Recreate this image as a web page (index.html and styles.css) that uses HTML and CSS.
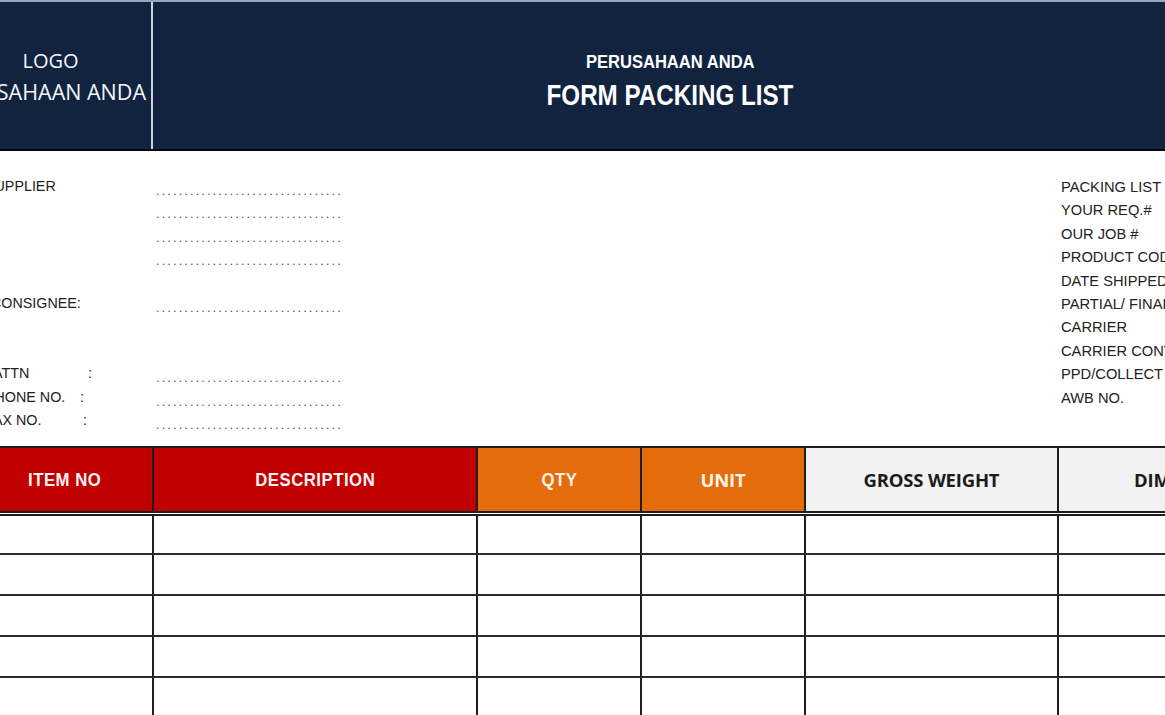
FILE: index.html
```html
<!DOCTYPE html>
<html lang="id">
<head>
<meta charset="utf-8">
<title>Form Packing List</title>
<link rel="stylesheet" href="styles.css">
</head>
<body>
<div class="sheet">
  <header class="banner">
    <div class="logo">
      <span>LOGO</span>
      <span class="logo-name">PERUSAHAAN ANDA</span>
    </div>
    <div class="title">
      <div class="company"><span class="sx">PERUSAHAAN ANDA</span></div>
      <div class="form-name"><span class="sx">FORM PACKING LIST</span></div>
    </div>
  </header>

  <section class="info">
    <div class="party">
      <div class="irow"><span class="lbl">SUPPLIER</span><span class="col"></span><span class="dots">.................................</span></div>
      <div class="irow"><span class="lbl"></span><span class="col"></span><span class="dots">.................................</span></div>
      <div class="irow"><span class="lbl"></span><span class="col"></span><span class="dots">.................................</span></div>
      <div class="irow"><span class="lbl"></span><span class="col"></span><span class="dots">.................................</span></div>
      <div class="irow"></div>
      <div class="irow"><span class="lbl lbl-cons">CONSIGNEE:</span><span class="col"></span><span class="dots">.................................</span></div>
      <div class="irow"></div>
      <div class="irow"></div>
      <div class="irow"><span class="lbl lbl-attn">ATTN</span><span class="col col-attn">:</span><span class="dots">.................................</span></div>
      <div class="irow"><span class="lbl">PHONE NO.</span><span class="col col-phone">:</span><span class="dots">.................................</span></div>
      <div class="irow"><span class="lbl">FAX NO.</span><span class="col col-fax">:</span><span class="dots">.................................</span></div>
    </div>
    <div class="meta">
      <div class="mrow">PACKING LIST</div>
      <div class="mrow">YOUR REQ.#</div>
      <div class="mrow">OUR JOB #</div>
      <div class="mrow">PRODUCT CODE</div>
      <div class="mrow">DATE SHIPPED</div>
      <div class="mrow">PARTIAL/ FINAL</div>
      <div class="mrow">CARRIER</div>
      <div class="mrow">CARRIER CONTACT</div>
      <div class="mrow">PPD/COLLECT</div>
      <div class="mrow">AWB NO.</div>
    </div>
  </section>

  <div class="items">
    <div class="trow thead">
      <div class="th red narrow"><span class="sx">ITEM NO</span></div>
      <div class="th red narrow"><span class="sx">DESCRIPTION</span></div>
      <div class="th orange narrow"><span class="sx">QTY</span></div>
      <div class="th orange sans">UNIT</div>
      <div class="th gray sans">GROSS WEIGHT</div>
      <div class="th gray sans dim">DIMENSION</div>
    </div>
    <div class="trow tbody first"><div class="td"></div><div class="td"></div><div class="td"></div><div class="td"></div><div class="td"></div><div class="td"></div></div>
    <div class="trow tbody"><div class="td"></div><div class="td"></div><div class="td"></div><div class="td"></div><div class="td"></div><div class="td"></div></div>
    <div class="trow tbody"><div class="td"></div><div class="td"></div><div class="td"></div><div class="td"></div><div class="td"></div><div class="td"></div></div>
    <div class="trow tbody"><div class="td"></div><div class="td"></div><div class="td"></div><div class="td"></div><div class="td"></div><div class="td"></div></div>
    <div class="trow tbody"><div class="td"></div><div class="td"></div><div class="td"></div><div class="td"></div><div class="td"></div><div class="td"></div></div>
  </div>
</div>
</body>
</html>
```

FILE: styles.css
```css
html, body {
  margin: 0;
  padding: 0;
  background: #ffffff;
  overflow: hidden;
}

body {
  font-family: "Liberation Sans", Arial, sans-serif;
  color: #222222;
}

.sheet {
  width: 1237px;
  margin-left: -50px;
}

.sx {
  display: inline-block;
  white-space: nowrap;
  transform-origin: center;
}

/* ---------- banner ---------- */
.banner {
  display: flex;
  height: 147px;
  background: #11233f;
  border-top: 2px solid #98a6bb;
  border-bottom: 2px solid #050505;
}

.logo {
  width: 201px;
  border-right: 2px solid #c9d3e2;
  display: flex;
  flex-direction: column;
  align-items: center;
  justify-content: center;
  color: #f4f6fa;
  font-family: "Open Sans", "Noto Sans", sans-serif;
  font-size: 20px;
  line-height: 31px;
  white-space: nowrap;
  padding-top: 1px;
}

.logo-name {
  font-size: 21.5px;
  margin-left: -12px;
}

.title {
  flex: 1;
  display: flex;
  flex-direction: column;
  align-items: center;
  justify-content: center;
  color: #ffffff;
  font-family: "Liberation Sans", Arial, sans-serif;
  font-weight: bold;
  padding-top: 13px;
}

.company {
  font-size: 18.5px;
  line-height: 26px;
}

.company .sx {
  transform: scaleX(0.895);
}

.form-name {
  font-size: 29px;
  line-height: 40px;
}

.form-name .sx {
  transform: scaleX(0.834);
}

/* ---------- info ---------- */
.info {
  display: flex;
  justify-content: space-between;
  padding-top: 24px;
  height: 258px;
}

.party {
  padding-left: 35px;
}

.irow {
  display: grid;
  grid-template-columns: 94px 77px 200px;
  height: 23.4px;
  line-height: 23.4px;
  font-size: 14.3px;
  white-space: nowrap;
}

.lbl-cons { margin-left: 6px; }
.lbl-attn { margin-left: 8px; }

.col-attn { padding-left: 9px; }
.col-phone { padding-left: 1px; }
.col-fax { padding-left: 4px; }

.dots {
  color: #555555;
  font-size: 13px;
  letter-spacing: 2.05px;
  position: relative;
  top: 4px;
}

.meta {
  width: 126px;
  white-space: nowrap;
  overflow: hidden;
  padding-top: 1px;
}

.mrow {
  height: 23.4px;
  line-height: 23.4px;
  font-size: 14.7px;
}

/* ---------- table ---------- */
.items {
  margin-top: 13px;
  padding-left: 28px;
}

.trow {
  display: grid;
  grid-template-columns: 174px 324px 164px 164px 253px 260px;
}

.thead {
  height: 63px;
  border-top: 2px solid #1e1e1e;
  border-bottom: 5px double #1e1e1e;
}

.th {
  display: flex;
  align-items: center;
  justify-content: center;
  font-weight: bold;
  white-space: nowrap;
  overflow: hidden;
}

.th + .th,
.td + .td {
  border-left: 2px solid #1e1e1e;
}

.red { background: #c00000; color: #fff4f4; }
.orange { background: #e46c0a; color: #fff3e8; }
.gray { background: #f2f2f2; color: #1c1c1c; }

.narrow {
  font-family: "Liberation Sans", Arial, sans-serif;
  font-size: 19px;
  letter-spacing: 0.6px;
}

.narrow .sx {
  transform: scaleX(0.88);
}

.sans {
  font-family: "Open Sans", "Noto Sans", sans-serif;
  font-size: 18.5px;
  letter-spacing: -0.2px;
}

.dim {
  justify-content: flex-start;
  padding-left: 75px;
}

.tbody {
  height: 39px;
  border-bottom: 2px solid #2a2a2a;
}

.tbody.first {
  height: 37px;
}
```
